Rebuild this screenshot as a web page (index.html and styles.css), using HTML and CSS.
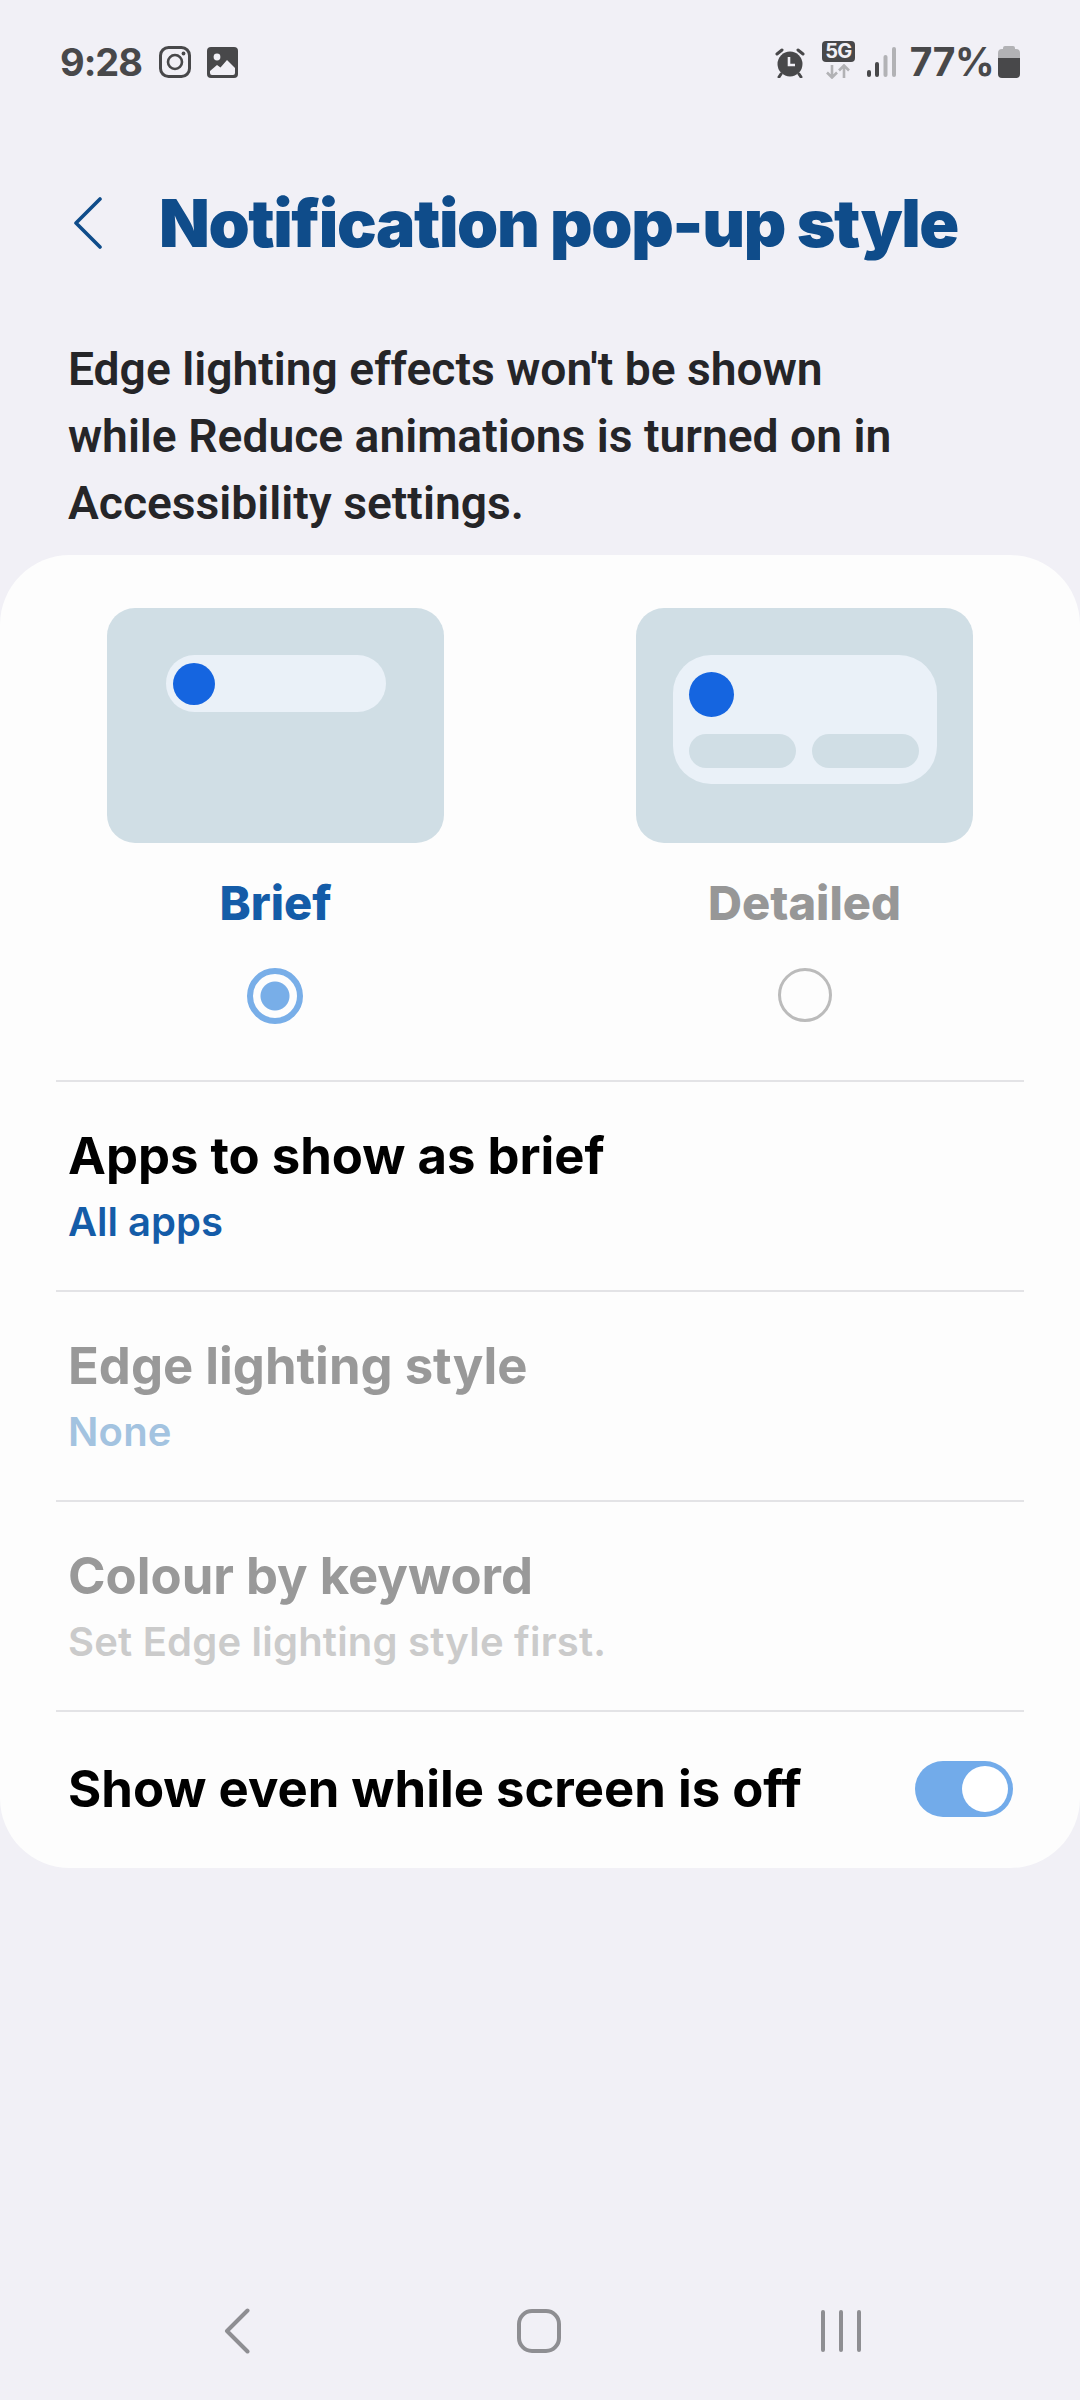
FILE: index.html
```html
<!DOCTYPE html>
<html><head><title>Notification pop-up style</title><meta charset="utf-8">
<link rel="stylesheet" href="styles.css">
</head>
<body>
<div class="pagina">
    <div class="estado">
        <div class="estadoIzq">
            <span class="hora">9:28</span>
            <svg class="icoInsta" width="32" height="32" viewBox="0 0 32 32"><rect x="1.5" y="1.5" width="29" height="29" rx="8" fill="none" stroke="#48484a" stroke-width="3"/><circle cx="16" cy="16" r="7" fill="none" stroke="#48484a" stroke-width="2.6"/><circle cx="24.5" cy="7.5" r="1.9" fill="#48484a"/></svg>
            <svg class="icoFoto" width="31" height="31" viewBox="0 0 31 31"><rect width="31" height="31" rx="4" fill="#48484a"/><circle cx="10" cy="10" r="3.4" fill="#f1f0f6"/><path d="M3 24l7-6 3.500 2.500L20 13l8 8v5a2 2 0 0 1-2 2H5a2 2 0 0 1-2-2z" fill="#f1f0f6"/></svg>
        </div>
        <div class="estadoDer">
            <svg class="icoAlarma" width="30" height="31" viewBox="0 0 30 31"><circle cx="15" cy="17" r="12.500" fill="#48484a"/><path d="M2 7l5-4M28 7l-5-4" stroke="#48484a" stroke-width="3" stroke-linecap="round"/><path d="M6 27l-2 3M24 27l2 3" stroke="#48484a" stroke-width="3" stroke-linecap="round"/><path d="M14 10v8h6" fill="none" stroke="#f1f0f6" stroke-width="2.600"/></svg>
            <div class="red">
                <span class="cincoG">5G</span>
                <svg width="26" height="15" viewBox="0 0 26 15"><path d="M7 1v12M2 8.500l5 5 5-5M19 14V2M14 6.500l5-5 5 5" fill="none" stroke="#b2b2b5" stroke-width="2.600"/></svg>
            </div>
            <svg class="icoSenal" width="29" height="30" viewBox="0 0 29 30"><rect x="0" y="23" width="4" height="7" rx="2" fill="#48484a"/><rect x="8" y="15" width="4" height="15" rx="2" fill="#48484a"/><rect x="16.500" y="8" width="4" height="22" rx="2" fill="#b2b2b5"/><rect x="25" y="0" width="4" height="30" rx="2" fill="#b2b2b5"/></svg>
            <span class="bateria">77%</span>
            <svg class="icoBateria" width="22" height="32" viewBox="0 0 22 32"><path d="M7 0h8a2 2 0 0 1 2 2v1h1a4 4 0 0 1 4 4v6H0V7a4 4 0 0 1 4-4h1V2a2 2 0 0 1 2-2z" fill="#b2b2b5"/><path d="M0 12h22v16a4 4 0 0 1-4 4H4a4 4 0 0 1-4-4z" fill="#48484a"/></svg>
        </div>
    </div>

    <div class="cabecera">
        <svg class="flecha" width="30" height="52" viewBox="0 0 30 52"><path d="M27 2L3 26l24 24" fill="none" stroke="#0f4c8a" stroke-width="3.600" stroke-linecap="round" stroke-linejoin="round"/></svg>
        <h1>Notification pop-up style</h1>
    </div>

    <p class="aviso">Edge lighting effects won't be shown<br>while Reduce animations is turned on in<br>Accessibility settings.</p>

    <div class="tarjeta">
        <div class="estilos">
            <div class="opcion">
                <div class="vista">
                    <div class="pastilla"><span class="punto"></span></div>
                </div>
                <div class="nombreOpcion activa">Brief</div>
                <div class="radio marcado"></div>
            </div>
            <div class="opcion">
                <div class="vista">
                    <div class="detalle">
                        <span class="punto"></span>
                        <div class="botones"><span></span><span></span></div>
                    </div>
                </div>
                <div class="nombreOpcion">Detailed</div>
                <div class="radio"></div>
            </div>
        </div>
        <div class="fila">
            <div class="titulo">Apps to show as brief</div>
            <div class="sub azul">All apps</div>
        </div>
        <div class="fila apagada">
            <div class="titulo">Edge lighting style</div>
            <div class="sub azul">None</div>
        </div>
        <div class="fila apagada">
            <div class="titulo">Colour by keyword</div>
            <div class="sub">Set Edge lighting style first.</div>
        </div>
        <div class="fila filaInterruptor">
            <div class="titulo">Show even while screen is off</div>
            <div class="interruptor"><span></span></div>
        </div>
    </div>

    <div class="navegacion">
        <svg width="26" height="46" viewBox="0 0 26 46"><path d="M23.500 2.500L3 23l20.500 20.500" fill="none" stroke="#8e8e92" stroke-width="4" stroke-linecap="round" stroke-linejoin="round"/></svg>
        <svg class="navInicio" width="44" height="44" viewBox="0 0 44 44"><rect x="2" y="2" width="40" height="40" rx="13" fill="none" stroke="#8e8e92" stroke-width="4"/></svg>
        <svg width="40" height="44" viewBox="0 0 40 44"><path d="M2 3v38M20 3v38M38 3v38" fill="none" stroke="#8e8e92" stroke-width="4" stroke-linecap="round"/></svg>
    </div>
</div>
</body>
</html>
```

FILE: styles.css
```css
html, body {margin: 0; padding: 0;}
body {background-color: #f1f0f6; font-family: "Inter", "Roboto", sans-serif;}
.pagina {width: 1080px; height: 2400px; display: flex; flex-direction: column;}

/* barra de estado */
.estado {height: 44px; padding: 40px 60px 0 60px; display: flex; justify-content: space-between; align-items: center; color: #48484a;}
.estadoIzq, .estadoDer {display: flex; align-items: center;}
.hora {font-size: 38px; font-weight: 700; margin-right: 17px; line-height: 44px; letter-spacing: -1px;}
.icoInsta {margin-right: 16px;}
.icoAlarma {margin-right: 17px;}
.red {display: flex; flex-direction: column; align-items: center; width: 33px; margin-right: 12px; margin-top: -4px;}
.cincoG {background-color: #48484a; color: #f1f0f6; font-size: 20px; font-weight: 700; width: 33px; height: 21px; line-height: 21px; border-radius: 4px; text-align: center; margin-bottom: 2px; letter-spacing: -1px;}
.icoSenal {margin-right: 14px;}
.bateria {font-size: 39px; font-weight: 700; line-height: 44px; margin-right: 4px; letter-spacing: -0.5px;}

/* cabecera */
.cabecera {display: flex; align-items: center; padding: 0 0 0 73px; margin-top: 105px; height: 68px;}
.flecha {margin-right: 56px;}
h1 {margin: 0; font-size: 66px; font-weight: 900; color: #0f4c8a; line-height: 68px; white-space: nowrap; letter-spacing: -1.4px;}

.aviso {margin: 79px 0 0 68px; font-family: "Roboto", sans-serif; font-size: 46.2px; line-height: 67px; font-weight: 600; color: #252528;}

/* tarjeta */
.tarjeta {margin-top: 18px; background-color: #fdfdfd; border-radius: 70px; height: 1313px; box-sizing: border-box;}
.estilos {display: flex; height: 525px; box-sizing: border-box; padding: 53px 107px 0 107px; justify-content: space-between;}
.opcion {width: 337px; display: flex; flex-direction: column; align-items: center;}
.vista {width: 337px; height: 235px; background-color: #d0dee5; border-radius: 28px; box-sizing: border-box; padding-top: 47px; display: flex; flex-direction: column; align-items: center;}
.pastilla {width: 220px; height: 57px; background-color: #eaf1f8; border-radius: 29px; box-sizing: border-box; padding: 8px 7px;}
.punto {display: block; width: 42px; height: 42px; border-radius: 50%; background-color: #1565e0;}
.detalle {width: 264px; height: 129px; background-color: #eaf1f8; border-radius: 38px; box-sizing: border-box; padding: 17px 16px;}
.detalle .punto {width: 45px; height: 45px;}
.botones {display: flex; gap: 16px; margin-top: 17px;}
.botones span {display: block; width: 107px; height: 34px; background-color: #d0dee5; border-radius: 17px;}
.nombreOpcion {margin-top: 35px; font-size: 47px; line-height: 50px; font-weight: 800; color: #979797;}
.nombreOpcion.activa {color: #145ca8;}
.radio {margin-top: 40px; width: 54px; height: 54px; box-sizing: border-box; border: 3px solid #bbbbbb; border-radius: 50%;}
.radio.marcado {width: 56px; height: 56px; border: 6px solid #78aee8; background: radial-gradient(circle, #78aee8 14px, #fdfdfd 15px); margin-right: 2px;}

.fila {margin: 0 56px; padding: 43px 12px 0 12px; height: 210px; box-sizing: border-box; border-top: 2px solid #e3e3e6;}
.titulo {font-size: 50.8px; line-height: 62px; font-weight: 700; color: #000000;}
.sub {font-size: 40px; line-height: 50px; font-weight: 600; color: #cbcbcb; margin-top: 10px;}
.sub.azul {color: #145ca8;}
.fila.apagada .titulo {color: #999999;}
.fila.apagada .sub.azul {color: #a3c3e0;}
.fila.apagada .sub {letter-spacing: 0.2px;}
.filaInterruptor {height: 155px; padding-top: 0; padding-right: 11px; display: flex; justify-content: space-between; align-items: center;}
.interruptor {width: 98px; height: 56px; border-radius: 28px; background-color: #72abea; box-sizing: border-box; padding: 5px 5px 5px 47px;}
.interruptor span {display: block; width: 46px; height: 46px; border-radius: 50%; background-color: #ffffff;}

/* navegacion */
.navegacion {margin-top: auto; height: 44px; padding: 0 219px 47px 224px; display: flex; justify-content: space-between; align-items: center;}
.navInicio {margin-left: 6px;}
```
